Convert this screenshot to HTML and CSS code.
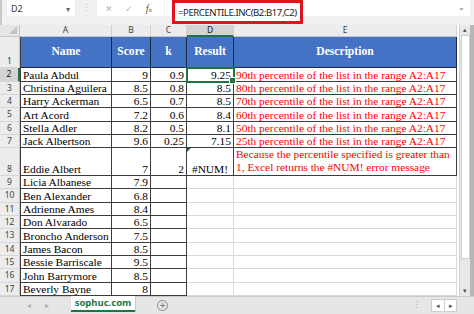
FILE: index.html
```html
<!DOCTYPE html>
<html>
<head>
<meta charset="utf-8">
<link rel="stylesheet" href="styles.css">
</head>
<body>
<div class="app">
  <div class="fbar">
    <div class="namebox"><span>D2</span><span class="caret">▾</span></div>
    <div class="sep">⋮</div>
    <div class="btns"><span class="bx">✕</span><span class="bok">✓</span><span class="bfx"><i>f</i><small>x</small></span></div>
    <div class="input">
      <span class="formula">=PERCENTILE.INC(B2:B17,C2)</span>
      <span class="chev">⌄</span>
    </div>
  </div>
  <div class="main">
    <div class="sheet">
      <div class="grid">
        <div class="corner"></div>
        <div class="ch">A</div><div class="ch">B</div><div class="ch">C</div><div class="ch sel">D</div><div class="ch">E</div>

        <div class="rh bottom">1</div>
        <div class="c h a">Name</div><div class="c h">Score</div><div class="c h">k</div><div class="c h">Result</div><div class="c h">Description</div>

        <div class="rh sel">2</div>
        <div class="c t a">Paula Abdul</div><div class="c t n">9</div><div class="c t n">0.9</div><div class="c t n active">9.25</div><div class="c t d">90th percentile of the list in the range A2:A17</div>

        <div class="rh">3</div>
        <div class="c t a">Christina Aguilera</div><div class="c t n">8.5</div><div class="c t n">0.8</div><div class="c t n">8.5</div><div class="c t d">80th percentile of the list in the range A2:A17</div>

        <div class="rh">4</div>
        <div class="c t a">Harry Ackerman</div><div class="c t n">6.5</div><div class="c t n">0.7</div><div class="c t n">8.5</div><div class="c t d">70th percentile of the list in the range A2:A17</div>

        <div class="rh">5</div>
        <div class="c t a">Art Acord</div><div class="c t n">7.2</div><div class="c t n">0.6</div><div class="c t n">8.4</div><div class="c t d">60th percentile of the list in the range A2:A17</div>

        <div class="rh">6</div>
        <div class="c t a">Stella Adler</div><div class="c t n">8.2</div><div class="c t n">0.5</div><div class="c t n">8.1</div><div class="c t d">50th percentile of the list in the range A2:A17</div>

        <div class="rh">7</div>
        <div class="c t a">Jack Albertson</div><div class="c t n">9.6</div><div class="c t n">0.25</div><div class="c t n">7.15</div><div class="c t d">25th percentile of the list in the range A2:A17</div>

        <div class="rh bottom">8</div>
        <div class="c t a">Eddie Albert</div><div class="c t n">7</div><div class="c t n">2</div><div class="c t err">#NUM!</div><div class="c t d wrap">Because the percentile specified is greater than 1, Excel returns the #NUM! error message</div>

        <div class="rh">9</div>
        <div class="c t a">Licia Albanese</div><div class="c t n">7.9</div><div class="c t"></div><div class="c"></div><div class="c"></div>

        <div class="rh">10</div>
        <div class="c t a">Ben Alexander</div><div class="c t n">6.8</div><div class="c t"></div><div class="c"></div><div class="c"></div>

        <div class="rh">11</div>
        <div class="c t a">Adrienne Ames</div><div class="c t n">8.4</div><div class="c t"></div><div class="c"></div><div class="c"></div>

        <div class="rh">12</div>
        <div class="c t a">Don Alvarado</div><div class="c t n">6.5</div><div class="c t"></div><div class="c"></div><div class="c"></div>

        <div class="rh">13</div>
        <div class="c t a">Broncho Anderson</div><div class="c t n">7.5</div><div class="c t"></div><div class="c"></div><div class="c"></div>

        <div class="rh">14</div>
        <div class="c t a">James Bacon</div><div class="c t n">8.5</div><div class="c t"></div><div class="c"></div><div class="c"></div>

        <div class="rh">15</div>
        <div class="c t a">Bessie Barriscale</div><div class="c t n">9.5</div><div class="c t"></div><div class="c"></div><div class="c"></div>

        <div class="rh">16</div>
        <div class="c t a">John Barrymore</div><div class="c t n">8.5</div><div class="c t"></div><div class="c"></div><div class="c"></div>

        <div class="rh">17</div>
        <div class="c t a">Beverly Bayne</div><div class="c t n">8</div><div class="c t"></div><div class="c"></div><div class="c"></div>
      </div>
    </div>
    <div class="vscroll">
      <div class="arrow">▴</div>
      <div class="thumb"></div>
      <div class="track"></div>
      <div class="arrow">▾</div>
    </div>
    <div class="edge"></div>
  </div>
  <div class="tabs">
    <span class="nav">◂</span>
    <span class="nav">▸</span>
    <div class="tab">sophuc.com</div>
    <span class="plus">+</span>
    <div class="spacer"></div>
    <span class="dots">⋮</span>
    <div class="hbtns"><span>◂</span><span>▸</span></div>
  </div>
</div>
</body>
</html>
```

FILE: styles.css
```css
* { box-sizing: border-box; margin: 0; padding: 0; }
html, body { width: 474px; height: 314px; overflow: hidden; }
body { background: #e6e6e6; font-family: "Noto Sans", "Open Sans", sans-serif; }

.app { display: flex; flex-direction: column; width: 474px; height: 314px; }

/* formula bar */
.fbar { height: 25px; flex: none; display: flex; align-items: flex-start; background: #f0f0f0; padding-left: 7px; border-left: 2px solid #c9c9c9; padding-right: 4px; }
.namebox { width: 68px; height: 16px; background: #fff; display: flex; align-items: center; justify-content: space-between; padding: 0 5px 0 4px; font-size: 9px; color: #333; margin-left: -2px; }
.namebox .caret { font-size: 8px; color: #666; }
.sep { width: 22px; height: 16px; text-align: center; color: #bbb; font-size: 9px; line-height: 16px; }
.btns { width: 67px; height: 16px; background: #fff; display: flex; align-items: center; justify-content: space-between; padding: 0 12px 0 8px; color: #b5b5b5; font-size: 9px; }
.btns .bfx { color: #555; font-family: "Liberation Serif", serif; font-size: 10px; }
.btns .bfx small { font-size: 7px; }
.input { flex: 1; height: 16px; background: #fff; margin-left: 1px; display: flex; align-items: flex-start; justify-content: space-between; padding-left: 7px; padding-right: 5px; }
.formula { display: flex; align-items: center; height: 24px; width: 131px; flex: none; border: 3px solid #e2141b; background: #fff; padding-left: 3px; font-size: 9.6px; letter-spacing: -0.45px; color: #222; white-space: nowrap; position: relative; z-index: 2; }
.chev { font-size: 8px; color: #666; line-height: 14px; }

/* main area */
.main { height: 271px; flex: none; display: flex; }
.sheet { width: 459px; background: #fff; padding-right: 2px; overflow: hidden; border-left: 0; }
.grid { display: grid; grid-template-columns: 20px 92px 39px 36px 47px 223px;
  grid-template-rows: 12px 31px 14px 13px 13px 14px 13px 13px 28px 13px 14px 13px 13px 14px 13px 13px 14px 13px; }

.corner { background: #e6e6e6; border-right: 1px solid #c6c6c6; border-bottom: 1px solid #c6c6c6; position: relative; }
.corner::after { content: ""; position: absolute; right: 2px; bottom: 2px; border-left: 8px solid transparent; border-bottom: 8px solid #c4c4c4; }
.ch { background: #ececec; border-right: 1px solid #d0d0d0; border-bottom: 1px solid #c6c6c6; font-size: 8.5px; color: #444; display: flex; align-items: center; justify-content: center; line-height: 1; }
.ch.sel { background: #d3d3d3; border-bottom: 2px solid #217346; color: #222; }
.rh { background: #ececec; border-right: 1px solid #c6c6c6; border-bottom: 1px solid #d6d6d6; font-size: 8.5px; color: #444; display: flex; align-items: center; justify-content: center; line-height: 1; }
.rh.bottom { align-items: flex-end; padding-bottom: 2px; }
.rh.sel { background: #d3d3d3; border-right: 2px solid #217346; color: #222; }

.c { border-right: 1px solid #d9d9d9; border-bottom: 1px solid #d9d9d9; font-family: "Liberation Serif", "Times New Roman", serif; font-size: 11.4px; line-height: 12px; color: #000; display: flex; align-items: flex-end; padding: 0 2px; white-space: nowrap; overflow: hidden; }
.c.t { border-right-color: #3c3c3c; border-bottom-color: #3c3c3c; }
.c.a { border-left: 1px solid #3c3c3c; }
.c.n { justify-content: flex-end; }
.c.d { color: #ff0000; }
.c.err { justify-content: center; overflow: visible; position: relative; }
.c.err::before { content: ""; position: absolute; left: 0; top: 0; border-top: 4px solid #217346; border-right: 4px solid transparent; }
.c.wrap { white-space: normal; align-items: flex-start; line-height: 13px; padding-top: 0; }
.c.h { background: #4472c4; color: #fff; font-weight: bold; font-size: 11.6px; justify-content: center; align-items: center; border-right-color: #1d2a44; border-bottom-color: #1d2a44; }
.c.active { outline: 2px solid #217346; outline-offset: -1px; position: relative; overflow: visible; z-index: 1; }
.c.active::after { content: ""; position: absolute; right: -3px; bottom: -3px; width: 5px; height: 5px; background: #217346; border: 1px solid #fff; }

/* vertical scroll */
.vscroll { width: 11px; flex: none; background: #e8e8e8; border-left: 1px solid #d0d0d0; display: flex; flex-direction: column; align-items: center; }
.vscroll .arrow { height: 10px; font-size: 7px; color: #555; line-height: 10px; }
.vscroll .thumb { width: 9px; height: 224px; background: #fff; border: 1px solid #cfcfcf; }
.vscroll .track { flex: 1; }
.edge { width: 4px; flex: none; background: #b7b7b7; }

/* sheet tabs */
.tabs { flex: 1; display: flex; align-items: flex-start; background: #e6e6e6; border-top: 1px solid #c9c9c9; padding-left: 20px; font-size: 8px; color: #b0b0b0; }
.tabs .nav { width: 18px; text-align: center; line-height: 15px; }
.tab { margin-left: 15px; width: 64px; height: 16px; background: #fff; border-bottom: 2px solid #217346; color: #217346; font-weight: bold; font-size: 9.5px; text-align: center; line-height: 14px; margin-top: -1px; box-shadow: 1px 0 0 #c8c8c8; }
.plus { margin-left: 22px; margin-top: 3px; width: 11px; height: 11px; border: 1px solid #8a8a8a; border-radius: 50%; color: #777; font-size: 10px; line-height: 9px; text-align: center; }
.spacer { flex: 1; }
.dots { line-height: 15px; color: #aaa; margin-right: 10px; font-size: 9px; }
.hbtns { display: flex; margin-top: 2px; margin-right: 17px; background: #fff; border: 1px solid #cfcfcf; }
.hbtns span { width: 12px; height: 11px; font-size: 7px; color: #555; text-align: center; line-height: 11px; }
.hbtns span + span { border-left: 1px solid #cfcfcf; }
```
